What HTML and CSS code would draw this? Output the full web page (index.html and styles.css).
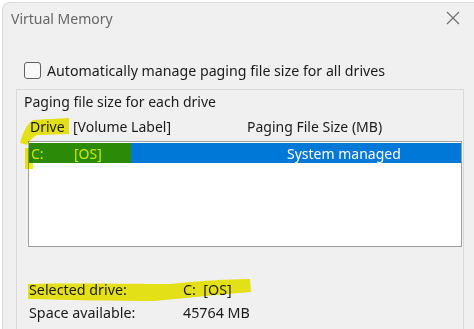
FILE: index.html
```html
<!DOCTYPE html>
<html lang="en">
<head>
  <meta charset="UTF-8">
  <title>Virtual Memory</title>
  <link rel="stylesheet" href="styles.css">
</head>
<body>

  <div class="window">
    <div class="titlebar">
      <span class="title">Virtual Memory</span>
      <svg class="close" width="14" height="14" viewBox="0 0 14 14">
        <path d="M1 1 L13 13 M13 1 L1 13" stroke="#707070" stroke-width="1.2" fill="none"/>
      </svg>
    </div>

    <label class="auto">
      <span class="checkbox"></span>
      Automatically manage paging file size for all drives
    </label>

    <div class="group">
      <div class="group-label">Paging file size for each drive</div>

      <div class="list-head">
        <span class="col-drive">Drive</span>
        <span class="col-label">[Volume Label]</span>
        <span class="col-size">Paging File Size (MB)</span>
      </div>

      <div class="list">
        <div class="row selected">
          <span class="mark">
            <span class="col-drive">C:</span>
            <span class="col-label">[OS]</span>
          </span>
          <span class="col-size">System managed</span>
        </div>
      </div>

      <div class="info">
        <div class="info-row"><span class="info-key">Selected drive:</span><span>C:&nbsp; [OS]</span></div>
        <div class="info-row"><span class="info-key">Space available:</span><span>45764 MB</span></div>
      </div>
    </div>

    <!-- marker strokes drawn over the dialog -->
    <svg class="marker marker-drive" width="56" height="60" viewBox="0 0 56 60">
      <path d="M3 30 C5 22 9 12 16 7 L52 5 L52 21 L20 22 C15 25 12 28 10 32 Z" fill="#f2ec00"/>
      <rect x="8" y="35" width="8" height="21" fill="#f2ec00"/>
    </svg>
    <svg class="marker marker-selected" width="232" height="30" viewBox="0 0 232 30">
      <path d="M3 10 C50 9 110 10 145 10 C160 9 175 6 225 5 L226 18 C200 20 170 23 130 27 C90 27 40 26 3 25 Z" fill="#f2ec00"/>
    </svg>
  </div>

</body>
</html>
```

FILE: styles.css
```css
body {
  margin: 0;
  background: #ffffff;
  font-family: 'Noto Sans', 'Open Sans', sans-serif;
  color: #1b1b1b;
  overflow: hidden;
}

.window {
  position: relative;
  margin: 2px 0 0 2px;
  height: 340px;
  background: #f0f0f0;
  border-left: 1px solid #dcdcdc;
  border-top: 1px solid #dcdcdc;
  border-radius: 8px 0 0 0;
}

.titlebar {
  display: flex;
  justify-content: space-between;
  align-items: center;
  height: 30px;
  padding: 0 14px 0 8px;
}

.title {
  font-size: 14px;
  color: #666666;
}

.auto {
  display: flex;
  align-items: center;
  gap: 6px;
  margin: 28px 0 0 21px;
  font-size: 14.2px;
}

.checkbox {
  width: 15px;
  height: 15px;
  border: 1px solid #606060;
  border-radius: 3px;
  background: #f8f8f8;
}

.group {
  margin: 9px 10px 0 13px;
  border: 1px solid #dadada;
  border-bottom: none;
  height: 240px;
  padding: 0 1px 0 11px;
}

.group-label {
  font-size: 14px;
  margin: -11px 0 0 -6px;
  background: #f0f0f0;
  display: inline-block;
  padding: 0 2px;
}

.list-head {
  display: flex;
  font-size: 14px;
  margin: 5px 0 5px 2px;
}

.col-drive {
  width: 43px;
}

.col-label {
  width: 174px;
}

.list {
  height: 104px;
  background: #ffffff;
  border: 1px solid #a0a0a0;
}

.row {
  display: flex;
  font-size: 14px;
  height: 20px;
  align-items: center;
  margin-top: 1px;
}

.selected {
  background: #0078d7;
  color: #ffffff;
}

.mark {
  display: flex;
  align-items: center;
  height: 20px;
  width: 100px;
  padding-left: 2px;
  background: #2b8a08;
  color: #cfe800;
}

.mark .col-label {
  width: 56px;
}

.row .col-size {
  margin-left: 156px;
}

.info {
  margin: 31px 0 0 1px;
  font-size: 14.3px;
}

.info-row {
  display: flex;
  height: 23px;
  align-items: center;
}

.info-key {
  width: 154px;
}

.marker {
  position: absolute;
  mix-blend-mode: multiply;
  opacity: 0.9;
}

.marker-drive {
  left: 14px;
  top: 110px;
}

.marker-selected {
  left: 22px;
  top: 271px;
}
```
